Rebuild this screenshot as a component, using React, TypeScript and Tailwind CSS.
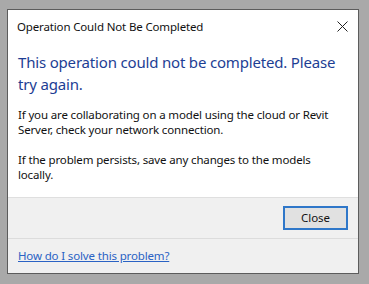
import React from "react";

export default function App() {
  const font = { fontFamily: '"Noto Sans", "Open Sans", sans-serif' };
  return (
    <div className="w-[369px] h-[284px] bg-[#a9a9a9] pt-[9px] pl-[7px]" style={font}>
      <div className="w-[352px] h-[265px] border border-[#5c5c5c] bg-white flex flex-col">
        <div className="h-[30px] flex items-center justify-between pl-[9px] pr-[10px] pt-[3px]">
          <span className="text-[11.5px] tracking-[-0.15px] text-[#111] leading-none">Operation Could Not Be Completed</span>
          <svg width="11" height="11" viewBox="0 0 11 11" className="text-[#222]">
            <path d="M0.5 0.5 L10.5 10.5 M10.5 0.5 L0.5 10.5" stroke="currentColor" strokeWidth="1" fill="none" />
          </svg>
        </div>
        <div className="flex-1 px-[10px] pt-[11px]">
          <div className="text-[15px] tracking-[-0.18px] leading-[22px] text-[#1d3e94]">
            This operation could not be completed. Please try again.
          </div>
          <div className="mt-[12px] text-[11.5px] tracking-[-0.15px] leading-[15px] text-[#111]">
            <p>If you are collaborating on a model using the cloud or Revit Server, check your network connection.</p>
            <p className="mt-[15px]">If the problem persists, save any changes to the models locally.</p>
          </div>
        </div>
        <div className="h-[41px] bg-[#f0f0f0] border-t border-[#dfdfdf] flex items-center justify-end pr-[10px]">
          <button className="w-[65px] h-[24px] bg-[#e1e1e1] border-2 border-[#2f77c9] text-[11.5px] text-[#111] leading-none flex items-center justify-center">
            Close
          </button>
        </div>
        <div className="h-[35px] bg-[#f0f0f0] border-t border-[#dcdcdc] flex items-center pl-[10px]">
          <a className="text-[11.5px] tracking-[-0.15px] text-[#2a62c4] underline leading-none">How do I solve this problem?</a>
        </div>
      </div>
    </div>
  );
}
